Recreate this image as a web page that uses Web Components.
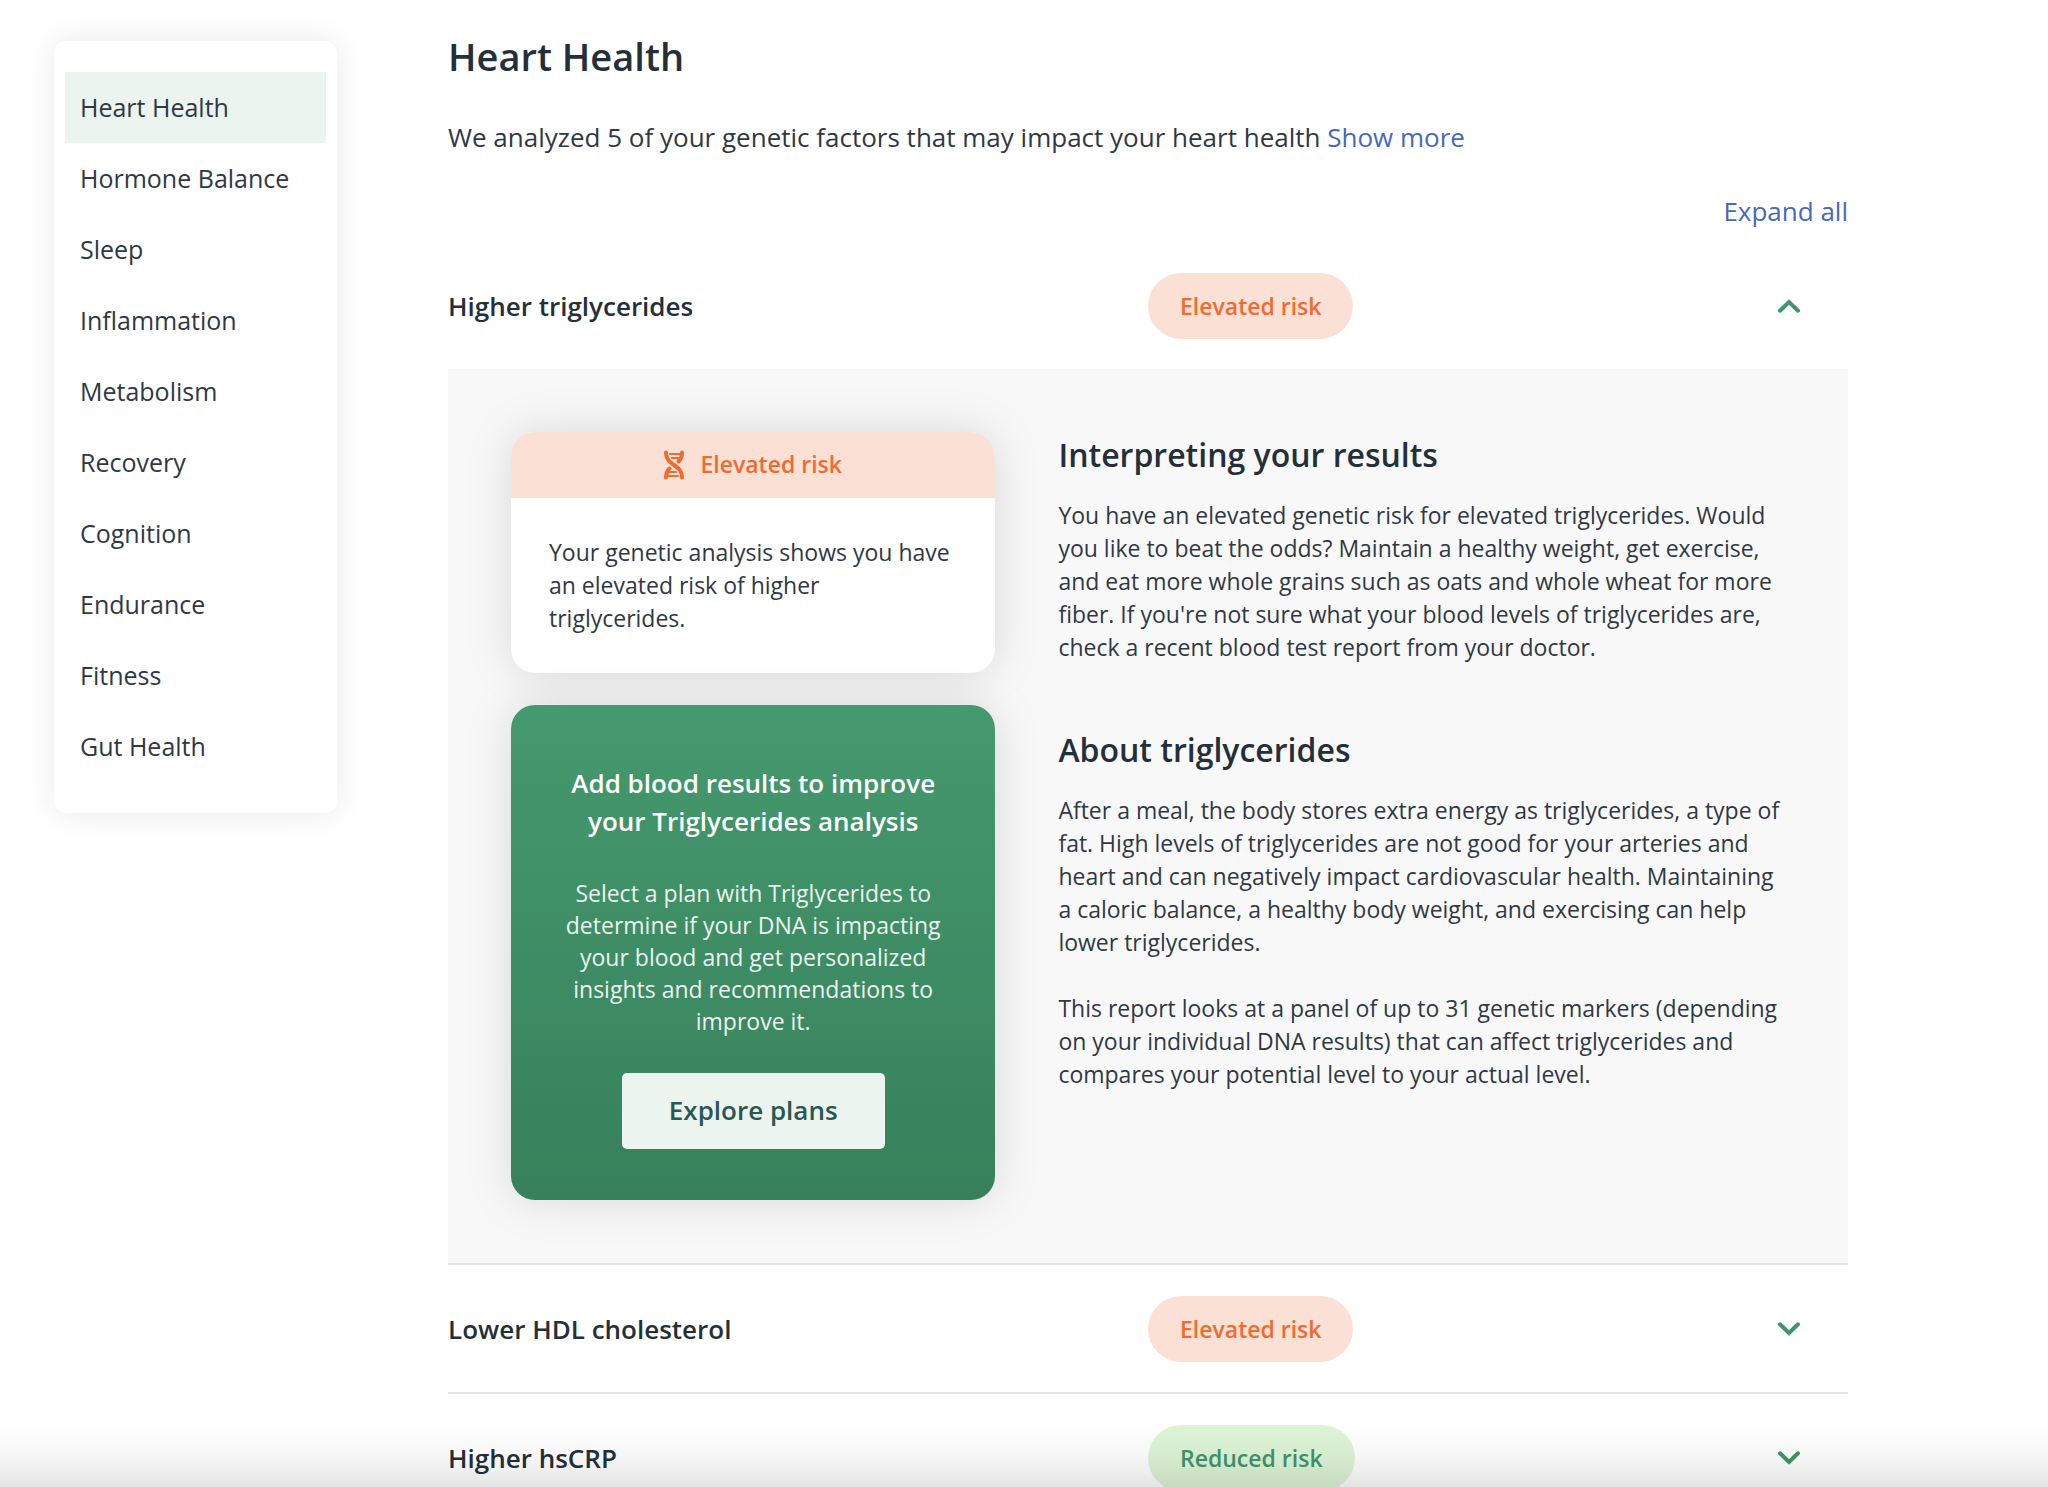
<!DOCTYPE html>
<html lang="en">
<head>
<meta charset="utf-8">
<meta name="viewport" content="width=device-width, initial-scale=1">
<title>Heart Health</title>
<style>
  :root {
    --text: #303844;
    --heading: #242f39;
    --link: #4669bb;
    --green: #41946b;
    --mint: #ebf4ef;
    --orange: #f26a30;
    --peach: #fbe0d6;
    --line: #e3e4e4;
  }
  body {
    margin: 0;
    background: #fff;
    color: var(--text);
    font-family: "Open Sans", "Noto Sans", sans-serif;
    font-size: 23px;
    line-height: 33px;
  }
</style>
</head>
<body>
<health-page>
  <side-menu slot="menu" items="Heart Health,Hormone Balance,Sleep,Inflammation,Metabolism,Recovery,Cognition,Endurance,Fitness,Gut Health"></side-menu>
  <page-intro title-text="Heart Health">We analyzed 5 of your genetic factors that may impact your heart health</page-intro>
  <risk-row label="Higher triglycerides" risk="Elevated risk" open>
    <risk-card slot="cards" risk="Elevated risk">Your genetic analysis shows you have an elevated risk of higher triglycerides.</risk-card>
    <promo-card slot="cards" action="Explore plans">
      <span slot="title">Add blood results to improve your Triglycerides analysis</span>
      Select a plan with Triglycerides to determine if your DNA is impacting your blood and get personalized insights and recommendations to improve it.
    </promo-card>
    <text-section heading="Interpreting your results">
      <p>You have an elevated genetic risk for elevated triglycerides. Would you like to beat the odds? Maintain a healthy weight, get exercise, and eat more whole grains such as oats and whole wheat for more fiber. If you're not sure what your blood levels of triglycerides are, check a recent blood test report from your doctor.</p>
    </text-section>
    <text-section heading="About triglycerides">
      <p>After a meal, the body stores extra energy as triglycerides, a type of fat. High levels of triglycerides are not good for your arteries and heart and can negatively impact cardiovascular health. Maintaining a caloric balance, a healthy body weight, and exercising can help lower triglycerides.</p>
      <p>This report looks at a panel of up to 31 genetic markers (depending on your individual DNA results) that can affect triglycerides and compares your potential level to your actual level.</p>
    </text-section>
  </risk-row>
  <risk-row label="Lower HDL cholesterol" risk="Elevated risk"></risk-row>
  <risk-row label="Higher hsCRP" risk="Reduced risk"></risk-row>
</health-page>

<script>
class HealthPage extends HTMLElement {
  constructor() {
    super();
    this.attachShadow({ mode: 'open' });
  }

  connectedCallback() {
    this.shadowRoot.innerHTML = `
      <style>
        :host {
          display: block;
          height: 100vh;
          overflow: auto;
          scrollbar-width: none;
        }
        .layout {
          display: flex;
          align-items: flex-start;
          gap: 111px;
          padding: 0 200px 0 54px;
        }
        aside {
          flex: none;
          width: 283px;
          padding-top: 41px;
        }
        main {
          flex: 1;
          min-width: 0;
          padding-top: 31px;
        }
        .fade {
          position: fixed;
          left: 0;
          right: 0;
          bottom: 0;
          height: 64px;
          background: linear-gradient(to bottom, rgba(0, 0, 0, 0), rgba(0, 0, 0, 0.03) 50%, rgba(0, 0, 0, 0.1));
          pointer-events: none;
        }
      </style>
      <div class="layout">
        <aside><slot name="menu"></slot></aside>
        <main><slot></slot></main>
      </div>
      <div class="fade"></div>
    `;
  }
}

class SideMenu extends HTMLElement {
  constructor() {
    super();
    this.attachShadow({ mode: 'open' });
  }

  connectedCallback() {
    const items = this.getAttribute('items').split(',');

    this.shadowRoot.innerHTML = `
      <style>
        :host {
          display: block;
        }
        nav {
          padding: 31px 11px;
          border-radius: 12px;
          background: #fff;
          box-shadow: 0 0 32px rgba(0, 0, 0, 0.09);
        }
        ul {
          margin: 0;
          padding: 0;
          list-style: none;
        }
        a {
          display: block;
          padding: 19px 15px;
          font-size: 25px;
          color: var(--text);
          text-decoration: none;
        }
        a[aria-current] {
          background: var(--mint);
        }
      </style>
      <nav aria-label="Health areas">
        <ul>
          ${items.map((item, i) => `<li><a href="#"${i === 0 ? ' aria-current="page"' : ''}>${item}</a></li>`).join('')}
        </ul>
      </nav>
    `;
  }
}

class PageIntro extends HTMLElement {
  constructor() {
    super();
    this.attachShadow({ mode: 'open' });
  }

  connectedCallback() {
    this.shadowRoot.innerHTML = `
      <style>
        :host {
          display: block;
          font-size: 26px;
        }
        h1 {
          margin: 0 0 40px;
          font-size: 38px;
          line-height: 50px;
          font-weight: 600;
          color: var(--heading);
        }
        p {
          margin: 0 0 41px;
        }
        a {
          color: var(--link);
          text-decoration: none;
        }
        .tools {
          display: flex;
          justify-content: flex-end;
          padding-bottom: 14px;
        }
        button {
          padding: 0;
          border: 0;
          background: none;
          font: inherit;
          color: var(--link);
          cursor: pointer;
        }
      </style>
      <h1>${this.getAttribute('title-text')}</h1>
      <p><slot></slot> <a href="#">Show more</a></p>
      <div class="tools"><button type="button">Expand all</button></div>
    `;
  }
}

class RiskRow extends HTMLElement {
  constructor() {
    super();
    this.attachShadow({ mode: 'open' });
  }

  connectedCallback() {
    this.render();
    this.shadowRoot.querySelector('.toggle').addEventListener('click', () => {
      this.toggleAttribute('open');
      this.shadowRoot.querySelector('.toggle').setAttribute('aria-expanded', this.hasAttribute('open'));
    });
  }

  render() {
    const risk = this.getAttribute('risk');
    const level = risk.startsWith('Reduced') ? 'reduced' : 'elevated';

    this.shadowRoot.innerHTML = `
      <style>
        :host {
          display: block;
          border-bottom: 2px solid var(--line);
        }
        .head {
          display: grid;
          grid-template-columns: 1fr 1fr;
          align-items: center;
          padding: 31px 0 30px;
        }
        h2 {
          margin: 0;
          font-size: 26px;
          line-height: 33px;
          font-weight: 600;
          color: var(--heading);
        }
        .status {
          display: flex;
          align-items: center;
          justify-content: space-between;
          padding-right: 37px;
        }
        .pill {
          padding: 17px 32px 16px;
          border-radius: 33px;
          font-size: 23px;
          font-weight: 600;
        }
        .elevated {
          background: var(--peach);
          color: var(--orange);
        }
        .reduced {
          background: #def4d6;
          color: var(--green);
        }
        .toggle {
          display: flex;
          padding: 0;
          border: 0;
          background: none;
          cursor: pointer;
        }
        .toggle svg {
          width: 44px;
          height: 44px;
          fill: none;
          stroke: var(--green);
          stroke-width: 4;
          stroke-linecap: round;
        }
        :host([open]) .toggle svg {
          transform: rotate(180deg);
        }
        .panel {
          display: none;
          grid-template-columns: 2fr 3fr;
          gap: 63px;
          padding: 63px;
          background: #f8f8f8;
        }
        :host([open]) .panel {
          display: grid;
        }
        .cards {
          display: flex;
          flex-direction: column;
          gap: 32px;
        }
        .texts {
          display: flex;
          flex-direction: column;
          gap: 63px;
        }
      </style>
      <div class="head">
        <h2>${this.getAttribute('label')}</h2>
        <div class="status">
          <span class="pill ${level}">${risk}</span>
          <button type="button" class="toggle" aria-expanded="${this.hasAttribute('open')}" aria-label="${this.getAttribute('label')}">
            <svg viewBox="0 0 44 44"><path d="M13 17.300 22 26l9-8.700"/></svg>
          </button>
        </div>
      </div>
      <div class="panel">
        <div class="cards"><slot name="cards"></slot></div>
        <div class="texts"><slot></slot></div>
      </div>
    `;
  }
}

class RiskCard extends HTMLElement {
  constructor() {
    super();
    this.attachShadow({ mode: 'open' });
  }

  connectedCallback() {
    this.shadowRoot.innerHTML = `
      <style>
        :host {
          display: block;
          border-radius: 24px;
          background: #fff;
          box-shadow: 0 0 48px rgba(0, 0, 0, 0.13);
          overflow: hidden;
        }
        header {
          display: flex;
          align-items: center;
          justify-content: center;
          gap: 16px;
          padding: 16px 0 17px;
          background: var(--peach);
          color: var(--orange);
          font-size: 23px;
          font-weight: 600;
        }
        svg {
          width: 20px;
          height: 30px;
          fill: none;
          stroke: currentColor;
          stroke-linecap: round;
        }
        p {
          margin: 0;
          padding: 38px;
        }
      </style>
      <header>
        <svg viewBox="0 0 20 30" aria-hidden="true">
          <path stroke-width="4" d="M2 2.500C2 9 5 11.500 10 15s8 6 8 12.500"/>
          <path stroke-width="4" d="M18 2.500c0 4-1 6.500-3.500 9M2 27.500c0-4 1-6.500 3.500-9"/>
          <path stroke-width="2" d="M6 4h11M8 8h8M4 22h8M3 26h11"/>
        </svg>
        <span>${this.getAttribute('risk')}</span>
      </header>
      <p><slot></slot></p>
    `;
  }
}

class PromoCard extends HTMLElement {
  constructor() {
    super();
    this.attachShadow({ mode: 'open' });
  }

  connectedCallback() {
    this.shadowRoot.innerHTML = `
      <style>
        :host {
          display: block;
          padding: 59px 48px 51px;
          border-radius: 24px;
          background: linear-gradient(#45996f, #37805b);
          box-shadow: 0 0 48px rgba(0, 0, 0, 0.13);
          text-align: center;
          color: #fff;
        }
        h3 {
          margin: 0 0 37px;
          font-size: 26px;
          line-height: 38px;
          font-weight: 600;
        }
        p {
          margin: 0 0 36px;
          font-size: 23px;
          line-height: 32px;
          color: #ebf4ef;
        }
        button {
          padding: 21px 47px 22px;
          border: 0;
          border-radius: 5px;
          background: #ebf4ef;
          font: inherit;
          font-size: 26px;
          line-height: 33px;
          font-weight: 600;
          color: #2a5751;
          cursor: pointer;
        }
      </style>
      <h3><slot name="title"></slot></h3>
      <p><slot></slot></p>
      <button type="button">${this.getAttribute('action')}</button>
    `;
  }
}

class TextSection extends HTMLElement {
  constructor() {
    super();
    this.attachShadow({ mode: 'open' });
  }

  connectedCallback() {
    this.shadowRoot.innerHTML = `
      <style>
        :host {
          display: block;
        }
        h3 {
          margin: 0 0 21px;
          font-size: 32px;
          line-height: 46px;
          font-weight: 600;
          color: var(--heading);
        }
        .body {
          display: flex;
          flex-direction: column;
          gap: 33px;
        }
        ::slotted(p) {
          margin: 0;
        }
      </style>
      <h3>${this.getAttribute('heading')}</h3>
      <div class="body"><slot></slot></div>
    `;
  }
}

customElements.define('health-page', HealthPage);
customElements.define('side-menu', SideMenu);
customElements.define('page-intro', PageIntro);
customElements.define('risk-row', RiskRow);
customElements.define('risk-card', RiskCard);
customElements.define('promo-card', PromoCard);
customElements.define('text-section', TextSection);
</script>
</body>
</html>
